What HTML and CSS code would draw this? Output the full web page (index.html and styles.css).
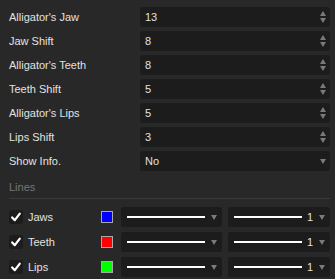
FILE: index.html
```html
<!DOCTYPE html>
<html lang="en">

<head>
    <meta charset="UTF-8">
    <meta name="viewport" content="width=device-width, initial-scale=1.0">
    <title>Alligator - Inputs</title>

    <link rel="stylesheet" href="styles.css">
</head>

<body>
    <div class="panel">
        <div class="row">
            <label>Alligator's Jaw</label>
            <div class="field">13<span class="spin"><i class="up"></i><i class="down"></i></span></div>
        </div>
        <div class="row">
            <label>Jaw Shift</label>
            <div class="field">8<span class="spin"><i class="up"></i><i class="down"></i></span></div>
        </div>
        <div class="row">
            <label>Alligator's Teeth</label>
            <div class="field">8<span class="spin"><i class="up"></i><i class="down"></i></span></div>
        </div>
        <div class="row">
            <label>Teeth Shift</label>
            <div class="field">5<span class="spin"><i class="up"></i><i class="down"></i></span></div>
        </div>
        <div class="row">
            <label>Alligator's Lips</label>
            <div class="field">5<span class="spin"><i class="up"></i><i class="down"></i></span></div>
        </div>
        <div class="row">
            <label>Lips Shift</label>
            <div class="field">3<span class="spin"><i class="up"></i><i class="down"></i></span></div>
        </div>
        <div class="row">
            <label>Show Info.</label>
            <div class="field">No<span class="spin"><i class="down"></i></span></div>
        </div>

        <div class="section">Lines</div>

        <div class="lines">
            <div class="line-row">
                <span class="check"><svg viewBox="0 0 14 14" width="14" height="14"><path d="M3.2 7.4 L5.8 10.2 L10.8 3.6" fill="none" stroke="#fff" stroke-width="2.2" stroke-linecap="round" stroke-linejoin="round"/></svg></span>
                <span class="name">Jaws</span>
                <span class="swatch blue"></span>
                <div class="pick"><span class="stroke"></span><i class="down"></i></div>
                <div class="pick"><span class="stroke"></span><span class="num">1</span><i class="down"></i></div>
            </div>
            <div class="line-row">
                <span class="check"><svg viewBox="0 0 14 14" width="14" height="14"><path d="M3.2 7.4 L5.8 10.2 L10.8 3.6" fill="none" stroke="#fff" stroke-width="2.2" stroke-linecap="round" stroke-linejoin="round"/></svg></span>
                <span class="name">Teeth</span>
                <span class="swatch red"></span>
                <div class="pick"><span class="stroke"></span><i class="down"></i></div>
                <div class="pick"><span class="stroke"></span><span class="num">1</span><i class="down"></i></div>
            </div>
            <div class="line-row">
                <span class="check"><svg viewBox="0 0 14 14" width="14" height="14"><path d="M3.2 7.4 L5.8 10.2 L10.8 3.6" fill="none" stroke="#fff" stroke-width="2.2" stroke-linecap="round" stroke-linejoin="round"/></svg></span>
                <span class="name">Lips</span>
                <span class="swatch green"></span>
                <div class="pick"><span class="stroke"></span><i class="down"></i></div>
                <div class="pick"><span class="stroke"></span><span class="num">1</span><i class="down"></i></div>
            </div>
        </div>
    </div>
</body>

</html>
```

FILE: styles.css
```css
* {
    box-sizing: border-box;
    padding: 0;
    margin: 0;
}

body {
    background-color: #282828;
    font-family: "Liberation Sans", Arial, sans-serif;
    font-size: 11px;
    color: #e2e2e2;
}

.panel {
    padding: 7px 5px 0 9px;
    display: flex;
    flex-direction: column;
    gap: 4px;
}

.row {
    display: flex;
    align-items: center;
    height: 20px;
}

.row label {
    width: 131px;
}

.field {
    flex: 1;
    height: 20px;
    background-color: #1c1c1c;
    border-radius: 3px;
    display: flex;
    align-items: center;
    padding-left: 5px;
    padding-right: 4px;
}

.spin {
    margin-left: auto;
    display: flex;
    flex-direction: column;
    gap: 2px;
}

.up,
.down {
    display: block;
    width: 0;
    height: 0;
    border-left: 3px solid transparent;
    border-right: 3px solid transparent;
}

.up {
    border-bottom: 5px solid #7a7a7a;
}

.down {
    border-top: 5px solid #7a7a7a;
}

.section {
    color: #777;
    line-height: 13px;
    margin-top: 6px;
    padding-bottom: 4px;
    border-bottom: 1px solid #3a3a3a;
}

.lines {
    display: flex;
    flex-direction: column;
    gap: 5px;
    padding-top: 4px;
}

.line-row {
    display: flex;
    align-items: center;
    height: 20px;
}

.check {
    width: 14px;
    height: 14px;
    background-color: #1c1c1c;
    border-radius: 3px;
    display: flex;
}

.name {
    margin-left: 5px;
    width: 73px;
}

.swatch {
    width: 12px;
    height: 12px;
    border: 1px solid #a8a8a8;
}

.blue {
    background-color: #0000ff;
}

.red {
    background-color: #ff0000;
}

.green {
    background-color: #00ff00;
}

.pick {
    height: 20px;
    width: 102px;
    background-color: #1c1c1c;
    border-radius: 3px;
    display: flex;
    align-items: center;
    padding: 0 5px 0 6px;
    gap: 6px;
}

.swatch + .pick {
    margin-left: 8px;
}

.pick + .pick {
    margin-left: 6px;
}

.stroke {
    flex: 1;
    height: 2px;
    background-color: #fff;
}

.num {
    margin-left: -1px;
    color: #e2e2e2;
}
```
